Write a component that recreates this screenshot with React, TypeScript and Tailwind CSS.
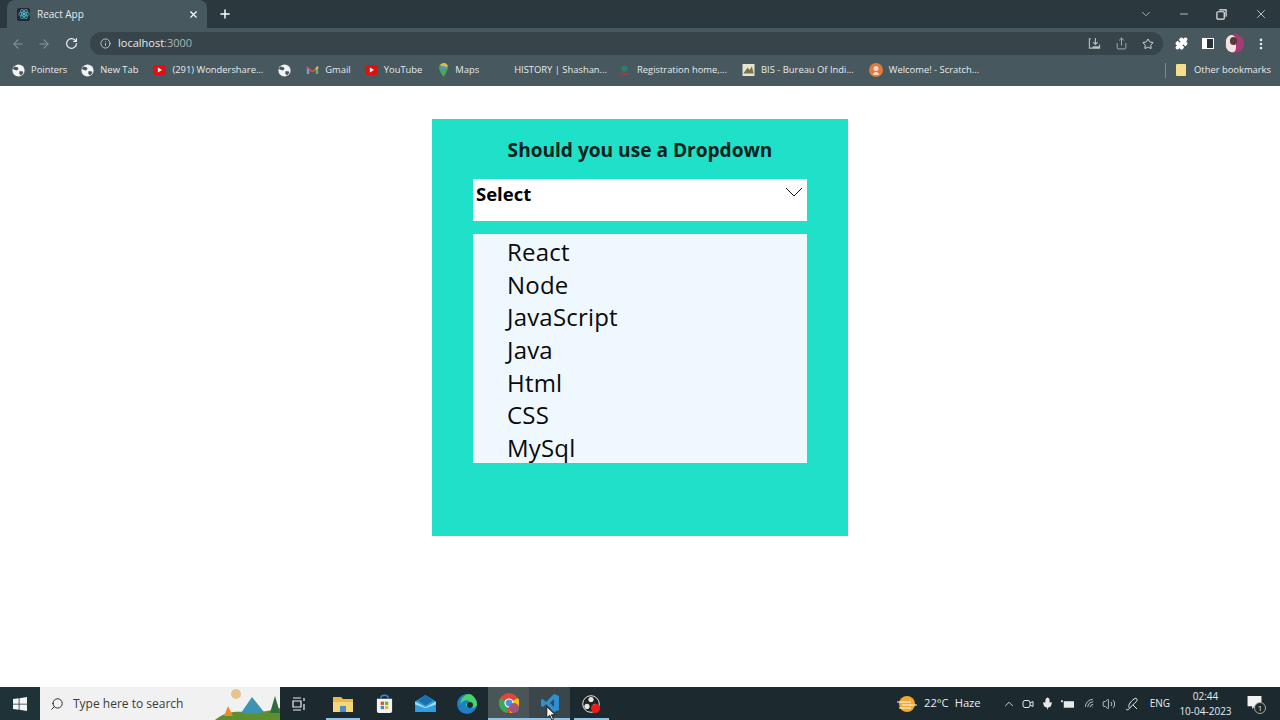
import { ArrowLeft, ArrowRight, ChevronDown, ChevronUp, Info, Minus, Plus, RotateCw, Search, Share, Star, Volume2, Wifi, X, Mic, MoreVertical, Puzzle } from "lucide-react";
import type { ReactNode } from "react";

const chromeFont = "font-['Open_Sans','Noto_Sans',sans-serif]";
const items = ["React", "Node", "JavaScript", "Java", "Html", "CSS", "MySql"];

function Globe() {
  return (
    <svg viewBox="0 0 16 16" className="h-[13px] w-[13px] shrink-0">
      <circle cx="8" cy="8" r="7.5" fill="#f1f3f4" />
      <path d="M3 3l4 1 1 2-2 2-3-1-2-1zM9 9l4 0 1 2-3 3-2-2z" fill="#47585e" />
    </svg>
  );
}

function YouTube() {
  return (
    <svg viewBox="0 0 16 12" className="h-[10px] w-[13px] shrink-0">
      <rect width="16" height="12" rx="3" fill="#e01010" />
      <path d="M6 3l5 3-5 3z" fill="#fff" />
    </svg>
  );
}

function Gmail() {
  return (
    <svg viewBox="0 0 16 12" className="h-[10px] w-[13px] shrink-0">
      <path d="M1 2v9h3V5z" fill="#6f9fe8" />
      <path d="M15 2v9h-3V5z" fill="#5ab574" />
      <path d="M1 1l7 6 7-6v3L8 9 1 4z" fill="#e8503f" />
      <path d="M12 3l3-2v3l-3 2z" fill="#f0c040" />
    </svg>
  );
}

function MapsPin() {
  return (
    <svg viewBox="0 0 12 16" className="h-[14px] w-[11px] shrink-0">
      <path d="M6 0a5 5 0 0 1 5 5c0 4-5 11-5 11S1 9 1 5a5 5 0 0 1 5-5z" fill="#4aa564" />
      <path d="M2 2l4 3 5-1a5 5 0 0 0-5-4z" fill="#e8b93a" />
      <circle cx="6" cy="5" r="2" fill="#5f8fd8" />
    </svg>
  );
}

function Bookmark({ icon, label, gap = "gap-[6px]", className = "" }: { icon?: ReactNode; label?: string; gap?: string; className?: string }) {
  return (
    <div className={`flex items-center ${gap} ${className}`}>
      {icon}
      {label ? <span className="whitespace-nowrap text-[9.4px] leading-none text-[#e8eaed]">{label}</span> : null}
    </div>
  );
}

function ChromeBar() {
  return (
    <div className={`shrink-0 ${chromeFont}`}>
      <div className="flex h-[28px] bg-[#2b383d] pl-[7px]">
        <div className="flex h-full w-[200px] items-center rounded-t-[8px] bg-[#47585e] pl-[10px] pr-[8px]">
          <div className="flex h-[13px] w-[13px] items-center justify-center rounded-[2px] bg-[#1f2b30]">
            <svg viewBox="0 0 16 16" className="h-[12px] w-[12px]" fill="none" stroke="#61dafb" strokeWidth="0.8">
              <ellipse cx="8" cy="8" rx="7" ry="2.8" />
              <ellipse cx="8" cy="8" rx="7" ry="2.8" transform="rotate(60 8 8)" />
              <ellipse cx="8" cy="8" rx="7" ry="2.8" transform="rotate(120 8 8)" />
              <circle cx="8" cy="8" r="1.2" fill="#61dafb" />
            </svg>
          </div>
          <span className="ml-[7px] text-[10px] text-[#e8eaed]">React App</span>
          <X className="ml-auto h-[11px] w-[11px] text-white" strokeWidth={2.5} />
        </div>
        <Plus className="ml-[11px] mt-[7px] h-[14px] w-[14px] text-white" strokeWidth={2.5} />
        <div className="ml-auto flex h-full items-center text-[#e8eaed]">
          <ChevronDown className="mr-[25px] h-[14px] w-[14px] text-[#b8c0c3]" strokeWidth={1.5} />
          <Minus className="mr-[26px] h-[12px] w-[12px]" strokeWidth={1.5} />
          <svg viewBox="0 0 12 12" className="mr-[27px] h-[11px] w-[11px]" fill="none" stroke="currentColor" strokeWidth="1.3">
            <rect x="1" y="3" width="8" height="8" rx="1" />
            <path d="M3.5 1H11v7.5" />
          </svg>
          <X className="mr-[12px] h-[14px] w-[14px]" strokeWidth={1.3} />
        </div>
      </div>
      <div className="flex h-[29px] items-center bg-[#47585e] pl-[11px] pt-[2px]">
        <ArrowLeft className="h-[14px] w-[14px] text-[#8d9a9e]" strokeWidth={1.8} />
        <ArrowRight className="ml-[12px] h-[14px] w-[14px] text-[#8d9a9e]" strokeWidth={1.8} />
        <RotateCw className="ml-[14px] h-[13px] w-[13px] text-[#f1f3f4]" strokeWidth={2.2} />
        <div className="ml-[12px] flex h-[23px] w-[1073px] items-center rounded-full bg-[#374449] pl-[10px] pr-[9px]">
          <Info className="h-[11px] w-[11px] text-[#c4cbce]" strokeWidth={2} />
          <span className="ml-[7px] text-[11px] text-[#e8eaed]">
            localhost<span className="text-[#aab4b8]">:3000</span>
          </span>
          <div className="ml-auto flex items-center gap-[14px] text-[#b8c0c3]">
            <svg viewBox="0 0 14 14" className="h-[13px] w-[13px]" fill="none" stroke="currentColor" strokeWidth="1.2">
              <path d="M3 2H1.5v10h11V8M8 1v7M5.5 5.5L8 8l2.5-2.5" />
              <path d="M5 11h7" strokeWidth="2" />
            </svg>
            <Share className="h-[13px] w-[13px]" strokeWidth={1.5} />
            <Star className="h-[12px] w-[12px] text-[#e8eaed]" strokeWidth={1.8} />
          </div>
        </div>
        <Puzzle className="ml-[12px] h-[13px] w-[13px] fill-white text-white" />
        <div className="ml-[14px] flex h-[11px] w-[12px] justify-end border-[1.5px] border-white bg-white">
          <div className="h-full w-[6px] bg-[#26343a]" />
        </div>
        <div className="relative ml-[11px] h-[19px] w-[19px] overflow-hidden rounded-full bg-[#a93a78]">
          <div className="absolute left-[1px] top-[1px] h-[18px] w-[10px] rounded-full bg-[#f0e4e0]" />
          <div className="absolute left-[5px] top-[3px] h-[8px] w-[7px] rounded-full bg-[#5a3a38]" />
        </div>
        <MoreVertical className="ml-[10px] h-[14px] w-[14px] text-[#e8eaed]" strokeWidth={2.5} />
      </div>
      <div className="flex h-[29px] items-center bg-[#47585e] pb-[3px] pl-[12px]">
        <Bookmark icon={<Globe />} label="Pointers" />
        <Bookmark icon={<Globe />} label="New Tab" className="ml-[14px]" />
        <Bookmark icon={<YouTube />} label="(291) Wondershare..." className="ml-[15px]" />
        <Bookmark icon={<Globe />} className="ml-[15px]" />
        <Bookmark icon={<Gmail />} label="Gmail" className="ml-[15px]" />
        <Bookmark icon={<YouTube />} label="YouTube" className="ml-[14px]" />
        <Bookmark icon={<MapsPin />} label="Maps" className="ml-[16px]" />
        <Bookmark label="HISTORY | Shashan..." className="ml-[35px]" />
        <Bookmark
          icon={
            <svg viewBox="0 0 14 14" className="h-[13px] w-[13px] shrink-0">
              <circle cx="7" cy="5" r="3.5" fill="#2f7a6b" />
              <path d="M1 9c2 4 10 4 12 0-3 2-9 2-12 0z" fill="#c9302c" />
            </svg>
          }
          label="Registration home,..."
          className="ml-[11px]"
        />
        <Bookmark
          icon={
            <svg viewBox="0 0 14 14" className="h-[12px] w-[13px] shrink-0">
              <rect width="14" height="14" fill="#e8e4d0" />
              <path d="M1 11l5-7 2 3 3-4 2 8z" fill="#77734a" />
            </svg>
          }
          label="BIS - Bureau Of Indi..."
          className="ml-[15px]"
        />
        <Bookmark
          icon={
            <svg viewBox="0 0 14 14" className="h-[14px] w-[14px] shrink-0">
              <circle cx="7" cy="7" r="7" fill="#e0793c" />
              <circle cx="7" cy="5.5" r="2.5" fill="#f6dcc6" />
              <path d="M4 12c0-4 6-4 6 0z" fill="#f6dcc6" />
            </svg>
          }
          label="Welcome! - Scratch..."
          className="ml-[15px]"
        />
        <div className="ml-auto flex h-[15px] items-center border-l border-[#7c8a8f] pl-[10px] pr-[9px]">
          <Bookmark
            icon={<div className="h-[12px] w-[10px] rounded-[1px] bg-[#f5df8a]" />}
            label="Other bookmarks"
            gap="gap-[8px]"
          />
        </div>
      </div>
    </div>
  );
}

function Card() {
  return (
    <div className="flex h-[417px] w-[416px] flex-col items-center bg-[#1fe0c8] font-['Open_Sans','Noto_Sans',sans-serif]">
      <h2 className="mt-[17px] h-[43px] text-[19.1px] font-bold leading-[28px] text-[#06201c]">Should you use a Dropdown</h2>
      <div className="flex h-[42px] w-[334px] items-start justify-between bg-white pl-[3px] pr-[4px]">
        <span className="mt-[1px] text-[18.5px] font-bold leading-[28px] text-black">Select</span>
        <svg viewBox="0 0 18 10" className="mt-[8px] h-[10px] w-[18px]" fill="none" stroke="#111" strokeWidth="1">
          <path d="M1 1l8 8 8-8" />
        </svg>
      </div>
      <ul className="mt-[13px] h-[229px] w-[334px] bg-[#f0f8ff] pl-[34px]">
        {items.map((item) => (
          <li key={item} className="h-[32.67px] text-[24px] leading-[36px] tracking-[0.2px] text-[#0a0a0a]">
            {item}
          </li>
        ))}
      </ul>
    </div>
  );
}

function TaskIcon({ width, active = "", running = false, children }: { width: string; active?: string; running?: boolean; children: ReactNode }) {
  return (
    <div className={`relative flex h-full items-center justify-center ${width} ${active}`}>
      {children}
      {running ? <div className="absolute bottom-0 left-[4px] right-[3px] h-[2px] bg-[#8fc4ea]" /> : null}
    </div>
  );
}

function Taskbar() {
  return (
    <div className={`flex h-[33px] shrink-0 items-center bg-[#1c2a30] ${chromeFont}`}>
      <div className="flex h-full w-[40px] items-center justify-center bg-[#1f3238]">
        <svg viewBox="0 0 16 16" className="h-[14px] w-[14px]" fill="#f4f6f6">
          <path d="M0 2.4l6.5-1v6.2H0zM7.4 1.3L16 0v7.6H7.4zM0 8.5h6.5v6.2l-6.5-1zM7.4 8.5H16V16l-8.6-1.3z" />
        </svg>
      </div>
      <div className="relative flex h-full w-[240px] items-center overflow-hidden bg-[#f1f1f1] pl-[10px]">
        <Search className="h-[14px] w-[14px] -scale-x-100 text-[#222]" strokeWidth={1.6} />
        <span className="ml-[9px] text-[12px] text-[#3a3a3a]">Type here to search</span>
        <svg viewBox="0 0 66 33" className="absolute right-0 top-0 h-[33px] w-[66px]">
          <path d="M1 33c8-7 18-9 28-8s24 0 37-4v12z" fill="#5e8f2e" />
          <circle cx="22" cy="7" r="5" fill="#e8c48a" />
          <path d="M10 29l4-10 5 10z" fill="#ee8a2e" />
          <path d="M27 26l11-16 12 15-12 2z" fill="#3d93b0" />
          <path d="M56 26l5-17 5 17z" fill="#2f6b3c" />
        </svg>
      </div>
      <svg viewBox="0 0 14 14" className="ml-[12px] h-[14px] w-[14px]" fill="none" stroke="#eee" strokeWidth="1.2">
        <path d="M1 1h8M1 13h8M1 4h8v6H1zM12 1v3M12 7v6" />
      </svg>
      <div className="ml-[16px] flex h-full items-center">
        <TaskIcon width="w-[41px]" running>
          <svg viewBox="0 0 20 16" className="h-[16px] w-[20px]">
            <path d="M0 1h8l2 2h10v13H0z" fill="#e8bb4a" />
            <path d="M0 6h20v10H0z" fill="#f5d77a" />
            <rect x="7" y="10" width="6" height="6" fill="#4a8fc4" />
          </svg>
        </TaskIcon>
        <TaskIcon width="w-[42px]">
          <svg viewBox="0 0 20 20" className="h-[19px] w-[19px]">
            <path d="M2 5h16v13a2 2 0 0 1-2 2H4a2 2 0 0 1-2-2z" fill="#f4f4f4" />
            <path d="M6 5c0-5 8-5 8 0" fill="none" stroke="#2f8fd0" strokeWidth="1.5" />
            <rect x="6" y="8" width="3.5" height="3.5" fill="#e2502e" />
            <rect x="10.5" y="8" width="3.5" height="3.5" fill="#6fb52e" />
            <rect x="6" y="12.5" width="3.5" height="3.5" fill="#2f8fd0" />
            <rect x="10.5" y="12.5" width="3.5" height="3.5" fill="#f0b429" />
          </svg>
        </TaskIcon>
        <TaskIcon width="w-[41px]">
          <svg viewBox="0 0 22 18" className="h-[17px] w-[21px]">
            <path d="M0 7l11-7 11 7v11H0z" fill="#2f9fe0" />
            <path d="M0 7l11 6 11-6v3l-11 4-11-4z" fill="#a8daf5" />
            <path d="M3 6l8-6 8 6-8 5z" fill="#1c6fae" />
          </svg>
        </TaskIcon>
        <TaskIcon width="w-[42px]">
          <svg viewBox="0 0 20 20" className="h-[20px] w-[20px]">
            <circle cx="10" cy="10" r="10" fill="#1d7fc9" />
            <path d="M20 10c0 3-3 4-6 4s-5-1-5-3 2-3 4-3c-2-3-7-2-10 2C4 3 9 0 12 0s8 5 8 10z" fill="#49d26a" />
            <circle cx="13" cy="11" r="3" fill="#1c2a30" />
          </svg>
        </TaskIcon>
        <TaskIcon width="w-[41px]" active="bg-[#4a5558] border-b-2 border-[#8fc4ea]">
          <div className="relative h-[20px] w-[20px]">
            <svg viewBox="0 0 20 20" className="h-[20px] w-[20px]">
              <circle cx="10" cy="10" r="10" fill="#e0463a" />
              <path d="M10 10L1.5 5A10 10 0 0 0 8 20z" fill="#3aa757" />
              <path d="M10 10l1 10a10 10 0 0 0 8-15z" fill="#f4c20d" />
              <circle cx="10" cy="10" r="4" fill="#4a8fe8" stroke="#fff" strokeWidth="1.2" />
            </svg>
            <div className="absolute bottom-0 right-0 h-[10px] w-[10px] rounded-full bg-[#a3577c]" />
          </div>
        </TaskIcon>
        <TaskIcon width="w-[41px]" active="bg-[#3a4649] border-b-2 border-[#8fc4ea]">
          <svg viewBox="0 0 20 20" className="h-[20px] w-[20px]">
            <path d="M14 1l5 2v14l-5 2L6 11l-3 3-2-1v-6l2-1 3 3z" fill="#2f8fd0" />
            <path d="M14 6l-4 4 4 4z" fill="#3a4649" />
          </svg>
          <svg viewBox="0 0 12 18" className="absolute left-[17px] top-[19px] h-[15px] w-[10px]">
            <path d="M1 1v13l3.5-3 2.5 6 2-1-2.5-5.5H11z" fill="#fff" stroke="#111" strokeWidth="1" />
          </svg>
        </TaskIcon>
        <TaskIcon width="w-[42px]" running>
          <div className="relative h-[18px] w-[18px]">
            <svg viewBox="0 0 18 18" className="h-[18px] w-[18px]">
              <circle cx="9" cy="9" r="8.3" fill="#222" stroke="#e6e6e6" strokeWidth="1" />
              <circle cx="9" cy="4.6" r="2.6" fill="#e6e6e6" />
              <circle cx="5" cy="11.4" r="2.6" fill="#e6e6e6" />
              <circle cx="13" cy="11.4" r="2.6" fill="#e6e6e6" />
              <circle cx="9" cy="9" r="1.8" fill="#222" />
            </svg>
            <div className="absolute bottom-0 right-0 h-[9px] w-[9px] rounded-full bg-[#f01a1a]" />
          </div>
        </TaskIcon>
      </div>
      <div className="ml-auto flex h-full items-center text-[#e8eaea]">
        <svg viewBox="0 0 20 16" className="h-[16px] w-[20px]">
          <circle cx="10" cy="8" r="8" fill="#f0a830" />
          <path d="M0 6h14M5 9h15M2 12h12" stroke="#fff" strokeWidth="1.2" />
        </svg>
        <span className="ml-[7px] text-[11.2px]">22°C</span>
        <span className="ml-[6px] text-[11.2px]">Haze</span>
        <ChevronUp className="ml-[21px] h-[14px] w-[14px]" strokeWidth={1.5} />
        <svg viewBox="0 0 12 12" className="ml-[6px] h-[12px] w-[12px]" fill="none" stroke="currentColor" strokeWidth="1">
          <rect x="1" y="2.5" width="7" height="7" rx="2" />
          <path d="M8 5l3-1.5v5L8 7" />
        </svg>
        <Mic className="ml-[7px] h-[13px] w-[13px] fill-[#e8eaea]" strokeWidth={1.5} />
        <svg viewBox="0 0 14 10" className="ml-[7px] h-[10px] w-[13px]" fill="currentColor">
          <rect x="3" y="2" width="11" height="7" />
          <rect x="0" y="1" width="2" height="2" />
        </svg>
        <Wifi className="ml-[10px] h-[12px] w-[12px] -rotate-45" strokeWidth={1.5} />
        <Volume2 className="ml-[6px] h-[14px] w-[14px]" strokeWidth={1.3} />
        <svg viewBox="0 0 14 14" className="ml-[9px] h-[14px] w-[14px]" fill="none" stroke="currentColor" strokeWidth="1">
          <path d="M1 12c2 2 4 0 3-2s2-6 5-8 4 1 2 3-5 4-6 6M8 8l4 4" />
        </svg>
        <span className="ml-[11px] text-[10px]">ENG</span>
        <div className="ml-[8px] flex w-[55px] flex-col items-center whitespace-nowrap text-[10px] leading-[15px]">
          <span>02:44</span>
          <span>10-04-2023</span>
        </div>
        <div className="relative ml-[14px] mr-[18px] h-[16px] w-[15px]">
          <svg viewBox="0 0 15 14" className="h-[13px] w-[15px]" fill="#f2f2f2">
            <path d="M0 0h15v11H8l-3 3v-3H0z" />
          </svg>
          <div className="absolute -bottom-[2px] -right-[4px] flex h-[12px] w-[12px] items-center justify-center rounded-full border border-[#aaa] bg-[#1c2a30] text-[8px] leading-none">1</div>
        </div>
      </div>
    </div>
  );
}

export default function App() {
  return (
    <div className="flex h-screen w-full flex-col overflow-hidden bg-white">
      <ChromeBar />
      <div className="flex flex-1 justify-center pt-[33px]">
        <Card />
      </div>
      <Taskbar />
    </div>
  );
}
